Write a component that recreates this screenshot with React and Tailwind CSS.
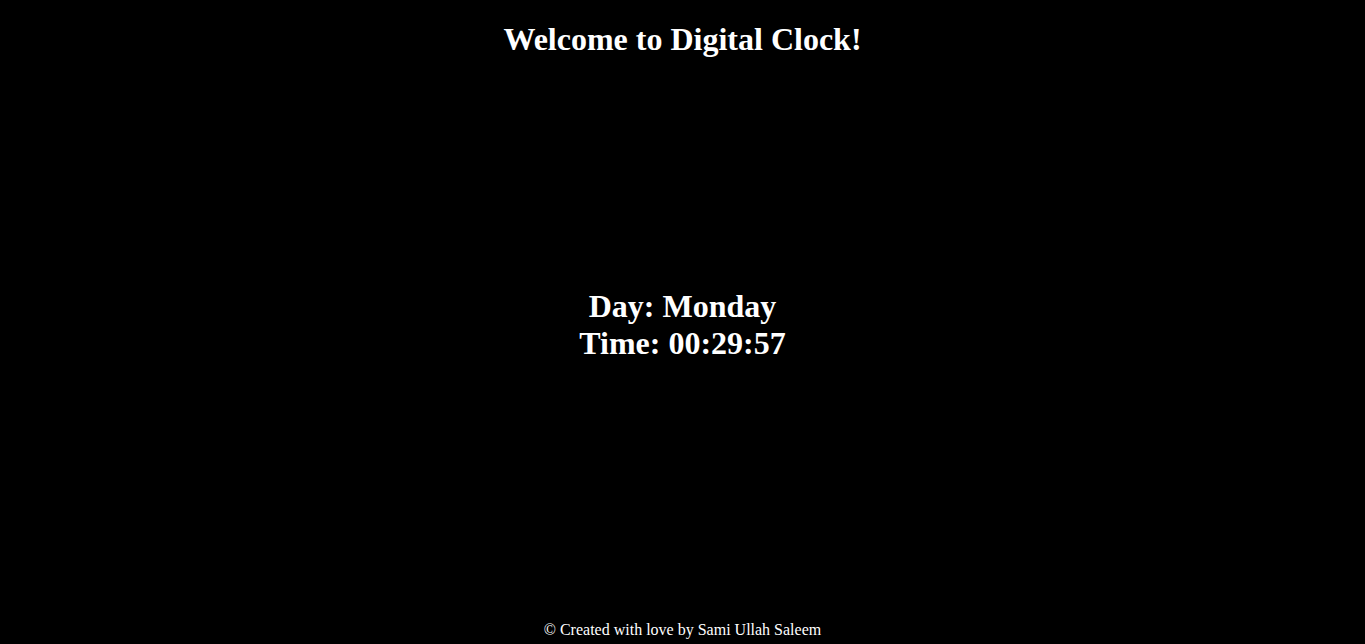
export default function App() {
  return (
    <div className="flex h-screen flex-col items-center bg-black text-white" style={{ fontFamily: '"Liberation Serif", "Times New Roman", serif' }}>
      <h1 className="mt-[21px] text-[32px] font-bold leading-[36.8px]">Welcome to Digital Clock!</h1>
      <div className="mt-[230px] flex flex-col items-center text-[32px] font-bold leading-[36.8px]">
        <div>Day: Monday</div>
        <div>Time: 00:29:57</div>
      </div>
      <footer className="mt-auto mb-[5px] text-[16px] leading-[18.4px]">© Created with love by Sami Ullah Saleem</footer>
    </div>
  );
}
